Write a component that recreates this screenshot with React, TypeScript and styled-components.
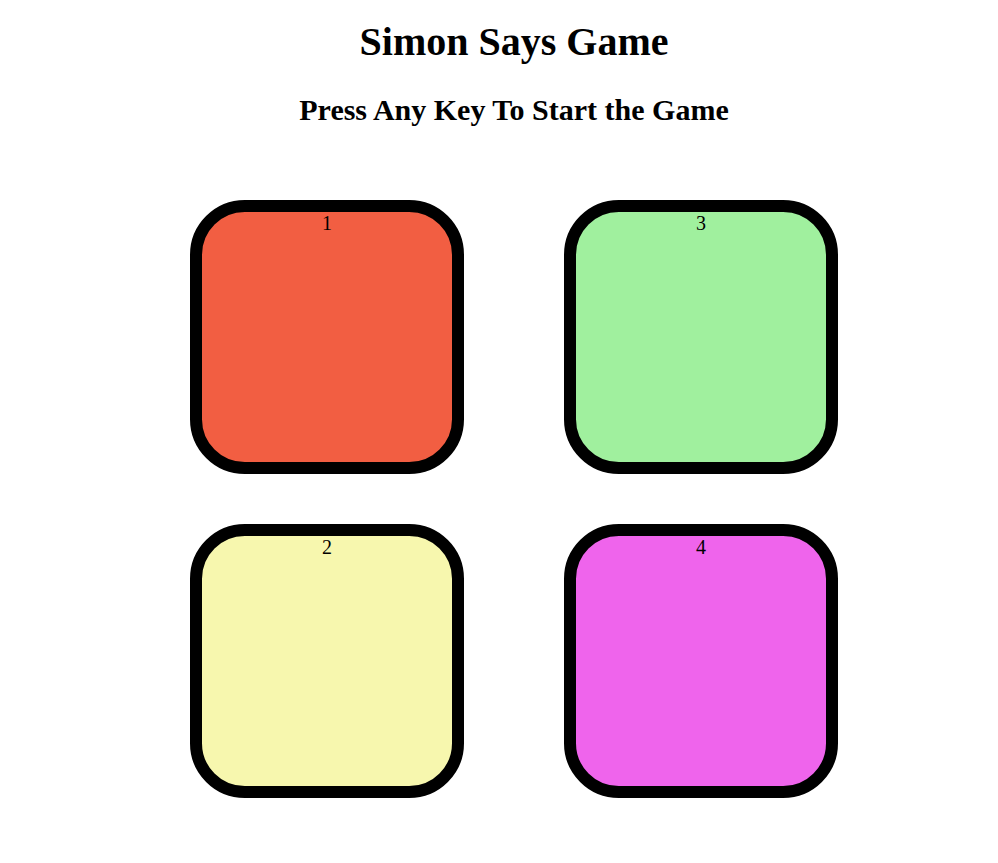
import React from 'react';
import styled, { createGlobalStyle } from 'styled-components';

const GlobalStyle = createGlobalStyle`
  body {
    margin: 0;
    background: #ffffff;
    font-family: "Liberation Serif", "Times New Roman", serif;
    color: #000000;
  }
`;

const Page = styled.div`
  padding: 20px 0 60px 30px;
  text-align: center;
`;

const Title = styled.h1`
  margin: 0;
  font-size: 40px;
  line-height: 44px;
  font-weight: 700;
`;

const Status = styled.h2`
  margin: 28.5px 0 0;
  font-size: 30px;
  line-height: 33px;
  font-weight: 700;
`;

const Board = styled.div`
  display: grid;
  grid-template-columns: repeat(2, 274px);
  column-gap: 100px;
  row-gap: 50px;
  justify-content: center;
  margin-top: 74.5px;
`;

const Pad = styled.div<{ $color: string }>`
  box-sizing: border-box;
  width: 274px;
  height: 274px;
  border: 12px solid #000000;
  border-radius: 20%;
  background-color: ${p => p.$color};
  font-size: 20px;
  text-align: center;
  cursor: pointer;
`;

// pads in the order they sit on the board (left column first)
const pads = [
  { id: 1, color: '#f25e42' },
  { id: 3, color: '#a0f09e' },
  { id: 2, color: '#f7f7ae' },
  { id: 4, color: '#ef64ec' },
];

const App: React.FC = () => {
  return (
    <Page>
      <GlobalStyle />
      <Title>Simon Says Game</Title>
      <Status>Press Any Key To Start the Game</Status>
      <Board>
        {pads.map(pad => (
          <Pad key={pad.id} $color={pad.color}>
            {pad.id}
          </Pad>
        ))}
      </Board>
    </Page>
  );
};

export default App;
